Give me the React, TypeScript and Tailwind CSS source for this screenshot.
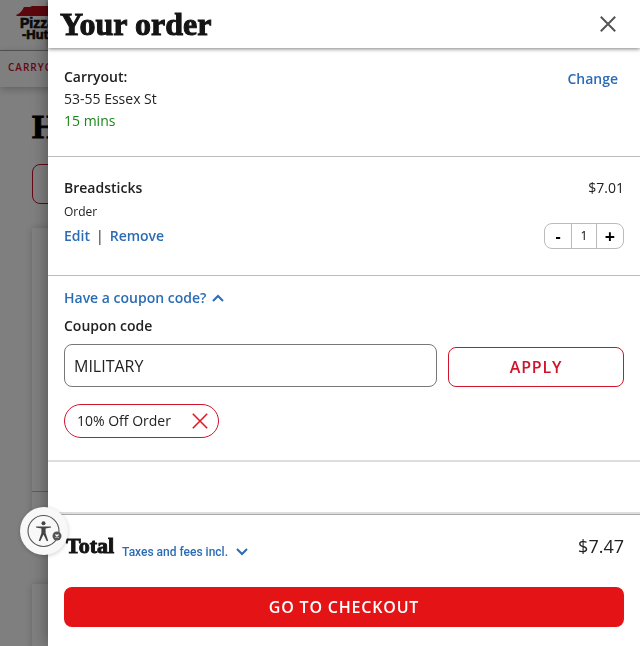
import React, { useState } from 'react';

const link = 'font-semibold text-[#2b6cb5]';

function Chevron({ up = false }: { up?: boolean }) {
  return (
    <svg width="12" height="8" viewBox="0 0 12 8" fill="none" stroke="currentColor" strokeWidth="2" aria-hidden="true">
      <path d={up ? 'M1 7L6 2L11 7' : 'M1 1L6 6L11 1'} />
    </svg>
  );
}

function Cross({ size, width }: { size: number; width: number }) {
  return (
    <svg width={size} height={size} viewBox="0 0 16 16" fill="none" stroke="currentColor" strokeWidth={width} aria-hidden="true">
      <path d="M0.8 0.8L15.2 15.2M15.2 0.8L0.8 15.2" />
    </svg>
  );
}

function Logo() {
  return (
    <svg width="72" height="42" viewBox="0 0 72 42" aria-label="Pizza Hut" className="shrink-0">
      <path d="M0 15C4 13.5 6 11 8 7L14 7L16 6H42L44 7H52C53 11 56 14 60 16H4C2 16 0 16 0 15Z" fill="#b80d1c" />
      <g fill="#151515" stroke="#151515" strokeWidth="0.7" fontFamily="Liberation Sans, sans-serif" fontWeight="700">
        <text x="4" y="28" fontSize="14">Pizza</text>
        <text x="6" y="39" fontSize="13">-Hut</text>
      </g>
    </svg>
  );
}

function Storefront() {
  return (
    <div className="flex h-screen flex-col overflow-hidden bg-white" aria-hidden="true">
      <div className="flex h-[51px] shrink-0 items-start border-b border-[#aaa] pl-4">
        <Logo />
      </div>
      <div className="flex h-9 shrink-0 items-center px-2 pb-1 text-[10px] leading-4 font-semibold tracking-widest text-[#c8102e] shadow-[0_2px_8px_rgba(0,0,0,0.25)]">
        CARRYOUT
      </div>
      <div className="flex flex-1 flex-col pl-8">
        <h2 className="mt-5 font-['Liberation_Serif',serif] text-[34px] leading-10 font-bold text-black [-webkit-text-stroke:1px_#000]">Hut</h2>
        <div className="mt-[17px] h-10 shrink-0 rounded-lg border border-[#c8102e]" />
        <div className="mt-6 flex h-80 shrink-0 flex-col justify-end pb-[56px] shadow-[0_0_8px_rgba(0,0,0,0.2)]">
          <div className="border-b border-[#bbb]" />
        </div>
        <div className="mt-9 h-40 shrink-0 shadow-[0_0_8px_rgba(0,0,0,0.2)]" />
      </div>
    </div>
  );
}

function Stepper() {
  const [count, setCount] = useState(1);
  return (
    <div className="grid h-[26px] w-20 grid-cols-3 rounded-lg border border-[#bbb] leading-6 text-black">
      <button aria-label="Decrease quantity" className="text-base leading-6 font-bold" onClick={() => setCount(Math.max(1, count - 1))}>
        -
      </button>
      <output className="border-x border-[#bbb] text-center text-xs leading-6">{count}</output>
      <button aria-label="Increase quantity" className="text-lg leading-6 font-bold" onClick={() => setCount(count + 1)}>
        +
      </button>
    </div>
  );
}

function AccessibilityButton() {
  return (
    <button aria-label="Accessibility options" className="fixed bottom-[91px] left-5 flex size-12 items-center justify-center rounded-full bg-[#f8f8f8] shadow-[0_1px_4px_rgba(0,0,0,0.2)]">
      <svg width="36" height="36" viewBox="0 0 36 36" fill="none">
        <circle cx="17.5" cy="18" r="15.5" stroke="#555" strokeWidth="1.1" />
        <circle cx="17.5" cy="10.3" r="2" fill="#444" />
        <path d="M10 13.4H25V14.6L19.6 15.4V20L22.2 27.7L20.8 28.2L17.5 21.5L14.2 28.2L12.8 27.7L15.4 20V15.4L10 14.6Z" fill="#444" />
        <circle cx="31" cy="23" r="4.5" fill="#555" />
        <path d="M29.5 21.5L32.5 24.5M32.5 21.5L29.5 24.5" stroke="#fff" strokeWidth="1.2" />
      </svg>
    </button>
  );
}

export default function App() {
  const [code, setCode] = useState('MILITARY');
  return (
    <div className="font-['Open_Sans','Noto_Sans',sans-serif] text-sm leading-[22px] text-[#222]">
      <Storefront />
      <div className="fixed inset-0 bg-black/50" />
      <main className="fixed inset-y-0 right-0 left-12 flex flex-col bg-white shadow-[0_0_16px_rgba(0,0,0,0.4)]">
        <header className="flex h-12 shrink-0 items-center justify-between pr-4 pl-3 shadow-[0_1px_4px_rgba(0,0,0,0.5)]">
          <h1 className="font-['Liberation_Serif',serif] text-[32px] leading-10 font-bold text-[#151515] [-webkit-text-stroke:1px_#151515]">
            Your order
          </h1>
          <button aria-label="Close" className="flex size-8 items-center justify-center text-[#555]">
            <Cross size={16} width={2} />
          </button>
        </header>

        <div className="flex-1 overflow-hidden">
          <section className="flex items-start justify-between border-b border-[#bbb] px-4 pt-[18px] pb-6">
            <div>
              <h2 className="font-semibold">Carryout:</h2>
              <p>53-55 Essex St</p>
              <p className="font-medium text-[#1c861c]">15 mins</p>
            </div>
            <a href="#change" className={`${link} mt-0.5 mr-1.5`}>Change</a>
          </section>

          <section className="border-b border-[#bbb] px-4 pt-5 pb-[26px]">
            <div className="flex justify-between">
              <h2 className="font-semibold">Breadsticks</h2>
              <span>$7.01</span>
            </div>
            <p className="mt-0.5 text-xs leading-[22px]">Order</p>
            <div className="flex items-center justify-between">
              <div className="flex gap-1.5">
                <a href="#edit" className={link}>Edit</a>
                <span>|</span>
                <a href="#remove" className={link}>Remove</a>
              </div>
              <Stepper />
            </div>
          </section>

          <section className="border-b-2 border-[#ddd] px-4 pt-[11px] pb-[22px]">
            <button className={`${link} flex items-center gap-1.5`}>
              Have a coupon code? <Chevron up />
            </button>
            <label htmlFor="coupon" className="mt-1.5 block font-semibold">Coupon code</label>
            <div className="mt-[7px] flex items-end gap-[11px]">
              <input
                id="coupon"
                value={code}
                onChange={(e) => setCode(e.target.value)}
                className="h-[43px] min-w-0 flex-1 rounded-lg border border-[#777] px-[9px] text-base"
              />
              <button className="h-10 w-44 rounded-lg border border-[#d0142c] text-base font-semibold tracking-wider text-[#d0142c]">
                APPLY
              </button>
            </div>
            <div className="mt-[17px] flex h-[34px] w-[155px] items-center justify-between rounded-full border border-[#d0142c] pr-2.5 pl-3">
              <span>10% Off Order</span>
              <button aria-label="Remove coupon" className="text-[#e01a22]">
                <Cross size={16} width={1.6} />
              </button>
            </div>
          </section>
        </div>

        <footer className="shrink-0 border-t border-[#aaa] px-4 pb-[19px] shadow-[0_-2px_0_#ddd]">
          <div className="flex h-[72px] items-start justify-between pt-4">
            <div className="flex items-start gap-2">
              <h2 className="pl-0.5 font-['Liberation_Serif',serif] text-[22px] leading-[30px] font-bold text-[#151515] [-webkit-text-stroke:1px_#151515]">
                Total
              </h2>
              <button className="mt-2.5 flex items-center gap-2 font-[Roboto,sans-serif] text-xs leading-[22px] font-medium text-[#2b6cb5]">
                Taxes and fees incl. <Chevron />
              </button>
            </div>
            <span className="text-lg leading-[30px]">$7.47</span>
          </div>
          <button className="block h-10 w-full rounded-lg bg-[#e31316] text-base font-semibold tracking-wider text-white">
            GO TO CHECKOUT
          </button>
        </footer>
      </main>
      <AccessibilityButton />
    </div>
  );
}
